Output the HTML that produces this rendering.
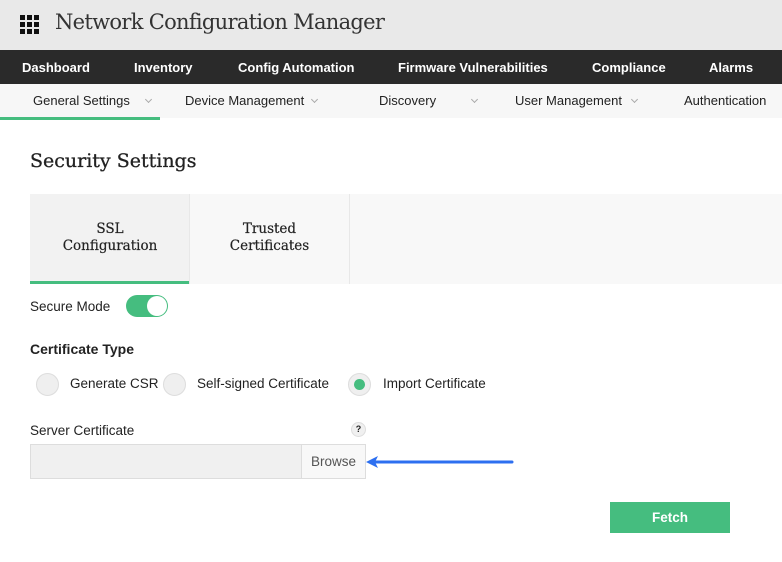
<!DOCTYPE html>
<html><head><meta charset="utf-8"><style>
*{margin:0;padding:0;box-sizing:border-box}
body{width:782px;height:562px;overflow:hidden;background:#fff;font-family:"Liberation Sans",sans-serif;color:#222;position:relative}
.abs{position:absolute;white-space:nowrap}
.hdr{position:absolute;left:0;top:0;width:782px;height:50px;background:#e9e9e9}
.nav{position:absolute;left:0;top:50px;width:782px;height:34px;background:#2a2a2a;color:#fff;font-size:13px;font-weight:bold}
.sub{position:absolute;left:0;top:84px;width:782px;height:34px;background:#f7f7f7;font-size:13px;color:#222}
.chev{position:absolute;width:5px;height:5px;border-right:1px solid #aaa;border-bottom:1px solid #aaa;transform:rotate(45deg)}
.serif{font-family:"DejaVu Serif","Liberation Serif",serif}
.radio{position:absolute;width:23px;height:23px;border-radius:50%;background:#efefef;border:1px solid #ddd}
</style></head><body>
<div class="hdr"></div>
<svg class="abs" style="left:20px;top:15px" width="20" height="20">
<g fill="#111">
<rect x="0" y="0" width="5" height="5"/><rect x="7" y="0" width="5" height="5"/><rect x="14" y="0" width="5" height="5"/>
<rect x="0" y="7" width="5" height="5"/><rect x="7" y="7" width="5" height="5"/><rect x="14" y="7" width="5" height="5"/>
<rect x="0" y="14" width="5" height="5"/><rect x="7" y="14" width="5" height="5"/><rect x="14" y="14" width="5" height="5"/>
</g></svg>
<div class="abs serif" style="left:55px;top:10px;font-size:21px;color:#333;letter-spacing:-0.7px">Network Configuration Manager</div>
<div class="nav">
<span class="abs" style="left:22px;top:10px">Dashboard</span>
<span class="abs" style="left:134px;top:10px">Inventory</span>
<span class="abs" style="left:238px;top:10px">Config Automation</span>
<span class="abs" style="left:398px;top:10px">Firmware Vulnerabilities</span>
<span class="abs" style="left:592px;top:10px">Compliance</span>
<span class="abs" style="left:709px;top:10px">Alarms</span>
</div>
<div class="sub">
<span class="abs" style="left:33px;top:9px">General Settings</span><i class="chev" style="left:146px;top:13px"></i>
<span class="abs" style="left:185px;top:9px">Device Management</span><i class="chev" style="left:312px;top:13px"></i>
<span class="abs" style="left:379px;top:9px">Discovery</span><i class="chev" style="left:472px;top:13px"></i>
<span class="abs" style="left:515px;top:9px">User Management</span><i class="chev" style="left:632px;top:13px"></i>
<span class="abs" style="left:684px;top:9px">Authentication</span>
</div>
<div class="abs" style="left:0;top:117px;width:160px;height:3px;background:#45bd7f"></div>
<div class="abs serif" style="left:30px;top:150px;font-size:19px;color:#222;-webkit-text-stroke:0.3px #222">Security Settings</div>
<div class="abs" style="left:30px;top:194px;width:752px;height:90px;background:#f8f8f8"></div>
<div class="abs" style="left:30px;top:194px;width:160px;height:90px;background:#f2f2f2;border-bottom:3px solid #45bd7f"></div>
<div class="abs" style="left:189px;top:194px;width:1px;height:90px;background:#e8e8e8"></div>
<div class="abs" style="left:349px;top:194px;width:1px;height:90px;background:#e8e8e8"></div>
<div class="abs serif" style="left:30px;top:221px;width:160px;text-align:center;font-size:13.5px;line-height:17px;color:#222;-webkit-text-stroke:0.2px #222">SSL<br>Configuration</div>
<div class="abs serif" style="left:190px;top:221px;width:159px;text-align:center;font-size:13.5px;line-height:17px;color:#222;-webkit-text-stroke:0.2px #222">Trusted<br>Certificates</div>
<div class="abs" style="left:30px;top:299px;font-size:13.5px">Secure Mode</div>
<div class="abs" style="left:126px;top:295px;width:42px;height:22px;border-radius:11px;background:#45bd7f"></div>
<div class="abs" style="left:147px;top:296px;width:20px;height:20px;border-radius:50%;background:#fff"></div>
<div class="abs" style="left:30px;top:341px;font-size:14px;font-weight:bold">Certificate Type</div>
<div class="radio" style="left:36px;top:373px"></div>
<div class="abs" style="left:70px;top:376px;font-size:13.5px">Generate CSR</div>
<div class="radio" style="left:163px;top:373px"></div>
<div class="abs" style="left:197px;top:376px;font-size:13.5px">Self-signed Certificate</div>
<div class="radio" style="left:348px;top:373px"></div>
<div class="abs" style="left:354px;top:379px;width:11px;height:11px;border-radius:50%;background:#45bd7f"></div>
<div class="abs" style="left:383px;top:376px;font-size:13.5px">Import Certificate</div>
<div class="abs" style="left:30px;top:423px;font-size:13.5px">Server Certificate</div>
<div class="abs" style="left:351px;top:422px;width:15px;height:15px;border-radius:50%;background:#f0f0f0;border:1px solid #ddd;font-size:9px;text-align:center;line-height:13px;font-weight:bold">?</div>
<div class="abs" style="left:30px;top:444px;width:336px;height:35px;background:#f0f0f0;border:1px solid #ddd"></div>
<div class="abs" style="left:301px;top:444px;width:65px;height:35px;background:#f8f8f8;border:1px solid #ddd;font-size:13.5px;color:#555;text-align:center;line-height:33px">Browse</div>
<svg class="abs" style="left:364px;top:454px" width="152" height="16">
<line x1="10" y1="8" x2="148" y2="8" stroke="#2d6ff0" stroke-width="3" stroke-linecap="round"/>
<path d="M2 8 L14 2 L11 8 L14 14 Z" fill="#2d6ff0"/>
</svg>
<div class="abs" style="left:610px;top:502px;width:120px;height:31px;background:#45bd7f;color:#fff;font-size:13.5px;font-weight:bold;text-align:center;line-height:31px">Fetch</div>
</body></html>
